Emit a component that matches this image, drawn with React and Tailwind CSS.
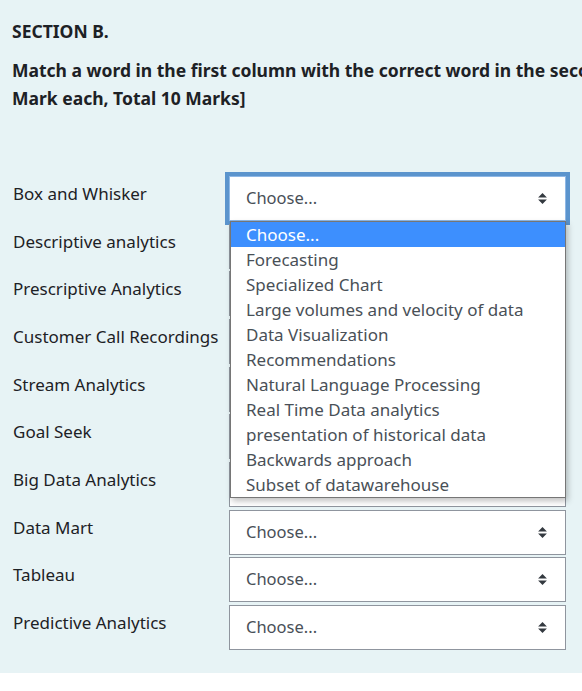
import React from 'react';

const rows = [
  'Box and Whisker',
  'Descriptive analytics',
  'Prescriptive Analytics',
  'Customer Call Recordings',
  'Stream Analytics',
  'Goal Seek',
  'Big Data Analytics',
  'Data Mart',
  'Tableau',
  'Predictive Analytics',
];

const options = [
  'Choose...',
  'Forecasting',
  'Specialized Chart',
  'Large volumes and velocity of data',
  'Data Visualization',
  'Recommendations',
  'Natural Language Processing',
  'Real Time Data analytics',
  'presentation of historical data',
  'Backwards approach',
  'Subset of datawarehouse',
];

const SortIcon = () => (
  <svg viewBox="0 0 4 5" className="w-[9px] h-[11px]" fill="#343a40">
    <path d="M2 0L0 2h4zm0 5L0 3h4z" />
  </svg>
);

// fake select box, first one has the focus ring
const SelectBox = ({ focused }) => (
  <div
    className={`relative w-[337px] h-[45px] bg-white border flex items-center justify-between pl-[16px] pr-[18px] text-[16.5px] text-[#495057] ${
      focused ? 'border-[#8fb8e6] outline-4 outline-solid outline-[#5b94cd]' : 'border-[#8f959e]'
    }`}
  >
    <span>Choose...</span>
    <SortIcon />
  </div>
);

export default function App() {
  return (
    <div className="w-[582px] h-[691px] bg-white overflow-hidden font-['Noto_Sans',sans-serif] text-[#1d2125]">
      <div className="relative bg-[#e7f3f5] pl-[12px] pt-[19px] pb-[20px]">
        <div className="text-[17.5px] leading-[24px] font-bold">SECTION B.</div>
        <div className="mt-[13px] text-[17.5px] leading-[28px] font-bold whitespace-nowrap">
          <div>Match a word in the first column with the correct word in the second column. [1</div>
          <div>Mark each, Total 10 Marks]</div>
        </div>

        <div className="mt-[64px] flex flex-col">
          {rows.map((label, i) => (
            <div key={label} className="h-[47.67px] flex items-start">
              <div className="w-[217px] pl-[1px] pt-[6px] text-[17px] leading-[24px] whitespace-nowrap">{label}</div>
              <SelectBox focused={i === 0} />
            </div>
          ))}
        </div>

        {/* open dropdown list of the first select */}
        <div className="absolute left-[230px] top-[221px] w-[336px] bg-white border border-[#767676] shadow-[2px_3px_6px_rgba(0,0,0,0.25)]">
          {options.map((opt, i) => (
            <div
              key={opt}
              className={`h-[25px] pl-[15px] text-[17px] leading-[25px] ${
                i === 0 ? 'bg-[#3d8ffe] text-white' : 'text-[#495057]'
              }`}
            >
              {opt}
            </div>
          ))}
        </div>
      </div>
    </div>
  );
}
